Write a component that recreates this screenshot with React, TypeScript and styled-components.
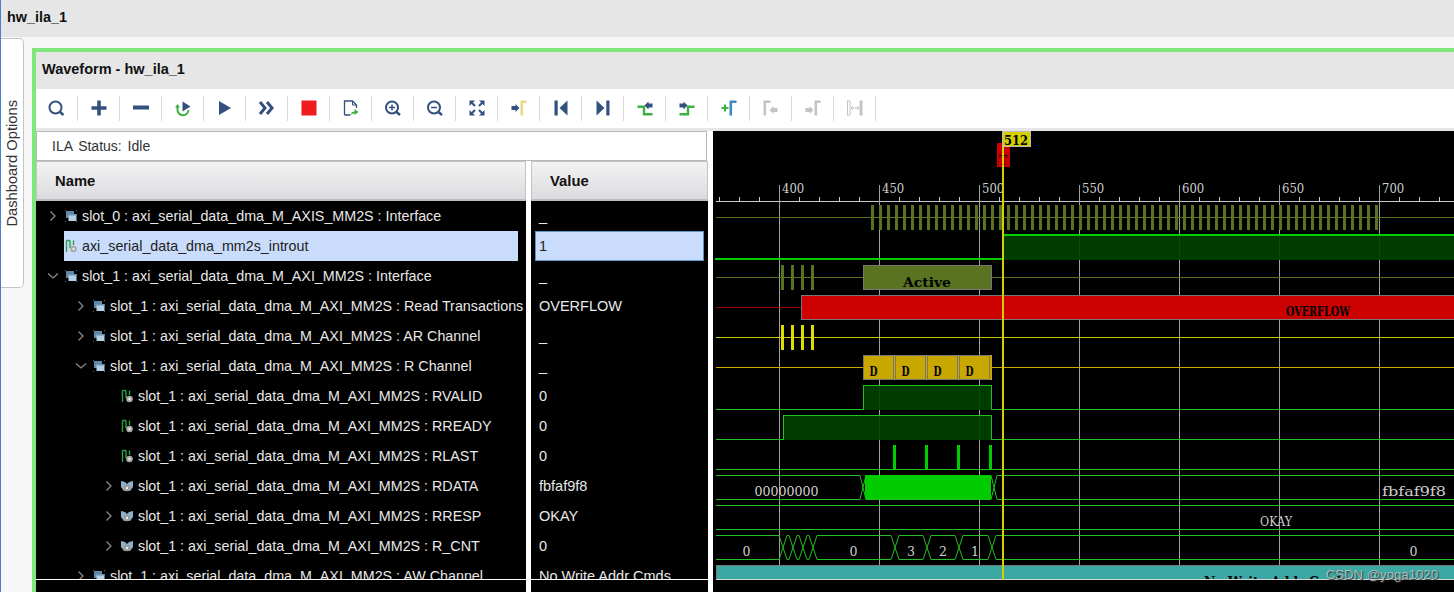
import React from 'react';
import styled, { createGlobalStyle } from 'styled-components';

const GlobalStyle = createGlobalStyle`
  html, body {
    margin: 0;
    padding: 0;
    background: #f7f7f7;
    overflow: hidden;
  }
  * { box-sizing: border-box; }
`;

const Page = styled.div`
  width: 1454px;
  height: 592px;
  display: flex;
  flex-direction: column;
  overflow: hidden;
  background: #f7f7f7;
  border-left: 1px solid #4a7fd0;
  font-family: "Liberation Sans", Arial, sans-serif;
  font-size: 14px;
`;

const TopBar = styled.div`
  height: 37px;
  flex: none;
  display: flex;
  align-items: center;
  padding: 0 0 3px 6px;
  background: #e6e6e6;
  font-size: 14.4px;
  font-weight: bold;
  color: #111;
`;

const Body = styled.div`
  flex: 1;
  display: flex;
  min-height: 0;
`;

const SideRail = styled.div`
  width: 31px;
  flex: none;
  padding-top: 1px;
`;

const SideTab = styled.div`
  width: 23px;
  height: 250px;
  display: flex;
  align-items: center;
  justify-content: center;
  background: #fff;
  border: 1px solid #c4c4c4;
  border-left: none;
  border-radius: 0 5px 5px 0;
`;

const TabLabel = styled.span`
  writing-mode: vertical-rl;
  transform: rotate(180deg);
  font-size: 14.7px;
  color: #333;
`;

const Panel = styled.div`
  flex: 1;
  margin-top: 11px;
  min-width: 0;
  display: flex;
  flex-direction: column;
  border-left: 4px solid #80e87a;
  border-top: 4px solid #80e87a;
`;

const TitleBar = styled.div`
  height: 37px;
  flex: none;
  display: flex;
  align-items: center;
  padding: 0 0 3px 6px;
  background: #e6e6e6;
  font-size: 14.5px;
  font-weight: bold;
  color: #111;
`;

const Toolbar = styled.div`
  height: 39px;
  flex: none;
  display: flex;
  padding-top: 7px;
  background: #fff;
`;

const ToolButton = styled.div`
  width: 42px;
  height: 25px;
  display: flex;
  align-items: center;
  justify-content: center;
  padding-bottom: 1px;
  border-right: 1px solid #d9d9d9;
  svg { display: block; }
`;

const Content = styled.div`
  flex: 1;
  min-height: 0;
  display: flex;
  border-top: 3px solid #e6e6e6;
  background: #fff;
`;

const LeftPane = styled.div`
  width: 677px;
  flex: none;
  display: flex;
  flex-direction: column;
  padding-right: 5px;
`;

const StatusBox = styled.div`
  width: 671px;
  height: 30px;
  flex: none;
  display: flex;
  align-items: center;
  padding-left: 15px;
  border: 1px solid #b8b8b8;
  background: #fff;
  color: #333;
  word-spacing: 2px;
`;

const Columns = styled.div`
  flex: 1;
  min-height: 0;
  display: flex;
  gap: 5px;
`;

const Column = styled.div<{ $width: number }>`
  width: ${p => p.$width}px;
  flex: none;
  display: flex;
  flex-direction: column;
  background: #000;
`;

const ColumnHeader = styled.div<{ $pad: number }>`
  height: 40px;
  flex: none;
  display: flex;
  align-items: center;
  padding-left: ${p => p.$pad}px;
  border: 1px solid #c4c4c4;
  border-bottom: 2px solid #bdbdbd;
  background: linear-gradient(#f3f3f3, #dcdce0);
  font-size: 14.8px;
  font-weight: bold;
  color: #111;
`;

const RowList = styled.div`
  height: 379px;
  flex: none;
  overflow: hidden;
  border-bottom: 1px solid #fff;
`;

const NameRow = styled.div<{ $level: number }>`
  height: 30px;
  display: flex;
  align-items: center;
  padding-left: ${p => 8 + p.$level * 28}px;
  padding-right: 8px;
  white-space: nowrap;
  font-size: 14.3px;
`;

const Chevron = styled.div`
  width: 20px;
  flex: none;
  display: flex;
  padding-left: 3px;
  svg { display: block; }
`;

const NameBody = styled.div<{ $selected?: boolean }>`
  flex: 1;
  height: 30px;
  display: flex;
  align-items: center;
  gap: 4px;
  background: ${p => (p.$selected ? '#c9dcfb' : 'transparent')};
  color: ${p => (p.$selected ? '#222' : '#e8e8e8')};
  svg { display: block; flex: none; }
`;

const ValueCell = styled.div<{ $selected?: boolean }>`
  height: 30px;
  margin: 0 4px;
  display: flex;
  align-items: center;
  padding-left: 4px;
  white-space: nowrap;
  font-size: 14.5px;
  background: ${p => (p.$selected ? '#c9dcfb' : 'transparent')};
  color: ${p => (p.$selected ? '#222' : '#e8e8e8')};
  outline: ${p => (p.$selected ? '1px solid #5a94c8' : 'none')};
  outline-offset: -1px;
`;

const WavePane = styled.div`
  position: relative;
  flex: 1;
  min-width: 0;
  background: #000;
  svg { display: block; }
`;

const Watermark = styled.div`
  position: absolute;
  right: 16px;
  bottom: 10px;
  font-size: 13.2px;
  color: rgba(205, 205, 205, 0.8);
  text-shadow: 1px 1px 1px #333;
`;

const WaveText = styled.text<{ $dark?: boolean }>`
  font-family: "DejaVu Serif", "Liberation Serif", serif;
  font-size: 13px;
  font-weight: ${p => (p.$dark ? 'bold' : 'normal')};
  fill: ${p => (p.$dark ? '#000' : '#cfcfcf')};
`;

const Label = ({ x, y, mid, cell = 8, dark, children }: {
  x: number;
  y: number;
  mid?: boolean;
  cell?: number;
  dark?: boolean;
  children: string;
}) => {
  const len = children.length * cell;
  return (
    <WaveText
      x={mid ? x - len / 2 : x}
      y={y}
      $dark={dark}
      textLength={len}
      lengthAdjust="spacingAndGlyphs"
    >
      {children}
    </WaveText>
  );
};

const BLUE = '#33507f';
const GREEN = '#3cb043';
const GOLD = '#e8d888';
const GREY = '#c4c4c4';

const Arrow = ({ x, y, left, color }: { x: number; y: number; left?: boolean; color: string }) => (
  <path
    d={left ? `M${x} ${y}l4-4v2h4v4h-4v2z` : `M${x + 8} ${y}l-4-4v2h-4v4h4v2z`}
    fill={color}
  />
);

const toolIcons: React.ReactNode[] = [
  <>
    <circle cx="9.5" cy="10.5" r="6" fill="none" stroke={BLUE} strokeWidth="2" />
    <path d="M14 15l3.5 3" stroke={BLUE} strokeWidth="2.4" />
  </>,
  <path d="M9.2 3.5h3.6v5.7h5.7v3.6h-5.7v5.7H9.2v-5.7H3.5V9.2h5.7z" fill={BLUE} />,
  <rect x="3" y="8.5" width="16" height="4" fill={BLUE} />,
  <>
    <path d="M5.5 9v3.5a5.5 5.5 0 0 0 11 .5" fill="none" stroke={GREEN} strokeWidth="2" />
    <path d="M3 10.5h5L5.5 7z" fill={GREEN} />
    <path d="M10.5 4.5l8 5-8 5z" fill={BLUE} />
  </>,
  <path d="M5 4l12 7-12 7z" fill={BLUE} />,
  <path d="M4 5l5 6-5 6M11 5l5 6-5 6" fill="none" stroke={BLUE} strokeWidth="3" />,
  <rect x="3.5" y="3.5" width="15" height="15" fill="#ee1c1c" />,
  <>
    <path d="M4.5 18V4h8l4 4v3M4.5 18h6" fill="none" stroke={BLUE} strokeWidth="1.3" />
    <path d="M12.5 4v4h4" fill="none" stroke={BLUE} strokeWidth="1" />
    <path d="M11 18c0-2.500 1.500-3.500 3.500-3.500V12l4 3-4 3v-1.500c-1.500 0-2.500.5-3.500 1.500z" fill={GREEN} />
  </>,
  <>
    <circle cx="10" cy="10.5" r="6" fill="none" stroke={BLUE} strokeWidth="2" />
    <path d="M14.5 15l3.500 3" stroke={BLUE} strokeWidth="2.4" />
    <path d="M7 10.500h6M10 7.500v6" stroke={BLUE} strokeWidth="1.5" />
  </>,
  <>
    <circle cx="10" cy="10.5" r="6" fill="none" stroke={BLUE} strokeWidth="2" />
    <path d="M14.5 15l3.500 3" stroke={BLUE} strokeWidth="2.4" />
    <path d="M7 10.500h6" stroke={BLUE} strokeWidth="1.5" />
  </>,
  <>
    <path d="M3.500 3.500h5.500l-5.500 5.500zM18.500 3.500v5.500l-5.500-5.500zM3.500 18.500v-5.500l5.500 5.500zM18.500 18.500h-5.500l5.500-5.500z" fill={BLUE} />
    <path d="M5 5l4 4M17 5l-4 4M5 17l4-4M17 17l-4-4" stroke={BLUE} strokeWidth="2" />
  </>,
  <>
    <Arrow x={3.5} y={11} color={BLUE} />
    <path d="M13.8 18.500V4.800h4.700" fill="none" stroke={GOLD} strokeWidth="2.6" />
  </>,
  <>
    <rect x="4.5" y="3.5" width="3.2" height="15" fill={BLUE} />
    <path d="M17.500 3.500v15L9.500 11z" fill={BLUE} />
  </>,
  <>
    <path d="M4.500 3.500v15l8-7.500z" fill={BLUE} />
    <rect x="14.3" y="3.5" width="3.2" height="15" fill={BLUE} />
  </>,
  <>
    <path d="M3.500 9.800h6.500v7.400h8.500" fill="none" stroke={GREEN} strokeWidth="2.4" />
    <Arrow x={10.5} y={8.5} left color={BLUE} />
  </>,
  <>
    <path d="M3.500 17.200h8.500V9.800h6.500" fill="none" stroke={GREEN} strokeWidth="2.4" />
    <Arrow x={3.5} y={8.5} color={BLUE} />
  </>,
  <>
    <path d="M3.500 11h7M7 7.500v7" stroke={GREEN} strokeWidth="2.2" />
    <path d="M12.800 18.500V4.800h5.700" fill="none" stroke="#3f88c0" strokeWidth="2.6" />
  </>,
  <>
    <path d="M4.800 18.500V4.800h5.700" fill="none" stroke={GREY} strokeWidth="2.6" />
    <Arrow x={9.5} y={13} left color={GREY} />
  </>,
  <>
    <Arrow x={3.5} y={13} color={GREY} />
    <path d="M13.800 18.500V4.800h4.700" fill="none" stroke={GREY} strokeWidth="2.6" />
  </>,
  <>
    <rect x="3.5" y="4" width="2.5" height="14" fill="none" stroke={GREY} />
    <rect x="15.5" y="3.5" width="3" height="15" fill={GREY} />
    <path d="M7 11h8M9 9l-2 2 2 2M13 9l2 2-2 2" fill="none" stroke={GREY} />
  </>,
];

const SlotIcon = () => (
  <svg width="14" height="14" viewBox="0 0 14 14">
    <rect x="2" y="2" width="8" height="7" fill="#5f87a8" />
    <rect x="4.5" y="5" width="8" height="7" fill="#b4d0e6" />
    <rect x="4.5" y="5" width="8" height="1.5" fill="#6d93b3" />
    <path d="M1 1h1v1H1zM12 1h1v1h-1zM1 12h1v1H1zM12 12h1v1h-1z" fill="#667" />
  </svg>
);

const BitIcon = () => (
  <svg width="14" height="14" viewBox="0 0 14 14">
    <path d="M2.500 13V1.500M6 9V1.500M2.500 1.500H6M9.500 1.500V6" fill="none" stroke="#2f9e44" strokeWidth="1.4" />
    <circle cx="9.5" cy="10" r="3.3" fill="#a9a9a9" />
    <circle cx="9.5" cy="10" r="1.2" fill="#eee" />
  </svg>
);

const BusIcon = () => (
  <svg width="14" height="14" viewBox="0 0 14 14">
    <path d="M1 2l4 1 2 2 2-2 4-1v6l-3 4H4L1 8z" fill="#8fb0c9" />
    <circle cx="7" cy="9" r="3.3" fill="#9a9a9a" />
    <circle cx="7" cy="9" r="1.2" fill="#eee" />
  </svg>
);

type RowData = {
  level: number;
  chevron?: 'right' | 'down';
  icon: 'slot' | 'bit' | 'bus';
  name: string;
  value: string;
  selected?: boolean;
};

const rows: RowData[] = [
  { level: 0, chevron: 'right', icon: 'slot', name: 'slot_0 : axi_serial_data_dma_M_AXIS_MM2S : Interface', value: '_' },
  { level: 0, icon: 'bit', name: 'axi_serial_data_dma_mm2s_introut', value: '1', selected: true },
  { level: 0, chevron: 'down', icon: 'slot', name: 'slot_1 : axi_serial_data_dma_M_AXI_MM2S : Interface', value: '_' },
  { level: 1, chevron: 'right', icon: 'slot', name: 'slot_1 : axi_serial_data_dma_M_AXI_MM2S : Read Transactions', value: 'OVERFLOW' },
  { level: 1, chevron: 'right', icon: 'slot', name: 'slot_1 : axi_serial_data_dma_M_AXI_MM2S : AR Channel', value: '_' },
  { level: 1, chevron: 'down', icon: 'slot', name: 'slot_1 : axi_serial_data_dma_M_AXI_MM2S : R Channel', value: '_' },
  { level: 2, icon: 'bit', name: 'slot_1 : axi_serial_data_dma_M_AXI_MM2S : RVALID', value: '0' },
  { level: 2, icon: 'bit', name: 'slot_1 : axi_serial_data_dma_M_AXI_MM2S : RREADY', value: '0' },
  { level: 2, icon: 'bit', name: 'slot_1 : axi_serial_data_dma_M_AXI_MM2S : RLAST', value: '0' },
  { level: 2, chevron: 'right', icon: 'bus', name: 'slot_1 : axi_serial_data_dma_M_AXI_MM2S : RDATA', value: 'fbfaf9f8' },
  { level: 2, chevron: 'right', icon: 'bus', name: 'slot_1 : axi_serial_data_dma_M_AXI_MM2S : RRESP', value: 'OKAY' },
  { level: 2, chevron: 'right', icon: 'bus', name: 'slot_1 : axi_serial_data_dma_M_AXI_MM2S : R_CNT', value: '0' },
  { level: 1, chevron: 'right', icon: 'slot', name: 'slot_1 : axi_serial_data_dma_M_AXI_MM2S : AW Channel', value: 'No Write Addr Cmds' },
];

const rowIcons = { slot: <SlotIcon />, bit: <BitIcon />, bus: <BusIcon /> };

const range = (from: number, to: number, step: number) => {
  const out: number[] = [];
  for (let v = from; v <= to; v += step) out.push(v);
  return out;
};

const END = 1454;
const START = 716;
const LINE = '#22c022';
const BRIGHT = '#00cc00';
const OLIVE = '#5a7320';
const DARK = '#004000';

const Bars = ({ xs, y, h, w, color }: { xs: number[]; y: number; h: number; w: number; color: string }) => (
  <>
    {xs.map(x => (
      <rect key={x} x={x} y={y} width={w} height={h} fill={color} />
    ))}
  </>
);

const HLine = ({ y, x1 = START, x2 = END, color }: { y: number; x1?: number; x2?: number; color: string }) => (
  <rect x={x1} y={y} width={x2 - x1} height={1} fill={color} />
);

// one bus row: two rails with crossings where the value changes
const Bus = ({ top, bottom, cross, w }: { top: number; bottom: number; cross: number[]; w: number }) => {
  const mid = (top + bottom) / 2;
  let d = `M${START} ${top}`;
  let e = `M${START} ${bottom}`;
  cross.forEach(x => {
    d += `L${x} ${top}L${x + w / 2} ${mid}L${x + w} ${bottom}`;
    e += `L${x} ${bottom}L${x + w / 2} ${mid}L${x + w} ${top}`;
    [d, e] = [e, d];
  });
  d += `L${END} ${top}`;
  e += `L${END} ${bottom}`;
  return <path d={`${d}${e}`} fill="none" stroke={LINE} strokeWidth="1" />;
};

const Waveform = () => (
  <svg width="741" height="461" viewBox="713 131 741 461" shapeRendering="crispEdges">
    <rect x="713" y="131" width="741" height="461" fill="#000" />

    {/* ruler */}
    <rect x={START} y={201} width={END - START} height={1} fill="#c8c8c8" />
    {range(719, END, 20).map(x => (
      <rect key={x} x={x} y={197} width={1} height={4} fill="#c8c8c8" />
    ))}
    {range(779, END, 100).map((x, i) => (
      <g key={x}>
        <rect x={x} y={185} width={1} height={381} fill="#a0a0a0" />
        <Label x={x + 3} y={193} cell={7.4}>{String(400 + i * 50)}</Label>
      </g>
    ))}

    {/* slot_0 */}
    <HLine y={217} color={OLIVE} />
    <Bars xs={range(871, 1378, 8)} y={205} h={25} w={3} color={OLIVE} />

    {/* introut */}
    <rect x={715} y={258} width={288} height={2} fill={BRIGHT} />
    <rect x={1004} y={236} width={450} height={24} fill={DARK} fillOpacity={0.93} />
    <rect x={1003} y={234} width={451} height={2} fill={BRIGHT} />
    <rect x={1003} y={234} width={1} height={26} fill={LINE} />

    {/* slot_1 */}
    <HLine y={277} color={OLIVE} />
    <Bars xs={[781, 791, 801, 811]} y={265} h={25} w={3} color={OLIVE} />
    <rect x={863.5} y={265.5} width={128} height={24} fill={OLIVE} stroke="#777" />
    <Label x={927} y={286.5} mid dark>Active</Label>

    {/* read transactions */}
    <HLine y={307} x2={801} color="#a00000" />
    <rect x={801.5} y={295.5} width={680} height={24} fill="#cc0000" stroke="#777" />
    <Label x={1286} y={316} dark>OVERFLOW</Label>

    {/* AR channel */}
    <HLine y={337} color="#c8c800" />
    <Bars xs={[781, 791, 801, 811]} y={325} h={25} w={3} color="#dddd00" />

    {/* R channel */}
    <HLine y={367} color="#c8a800" />
    <rect x={863} y={355} width={129} height={25} fill="#c8a800" />
    {[863, 895, 927, 959].map(x => (
      <rect key={x} x={x + 0.5} y={355.5} width={30} height={24} fill="#c8a800" stroke="#777" />
    ))}
    {[873.5, 905.5, 937.5, 969.5].map(x => (
      <Label key={x} x={x} y={376} mid dark>D</Label>
    ))}

    {/* RVALID */}
    <rect x={864} y={386} width={128} height={24} fill={DARK} fillOpacity={0.93} />
    <path d="M716 409.5H863.5V385.5H991.5V409.5H1454" fill="none" stroke={LINE} />

    {/* RREADY */}
    <rect x={784} y={416} width={208} height={24} fill={DARK} fillOpacity={0.93} />
    <path d="M716 439.5H783.5V415.5H991.5V439.5H1454" fill="none" stroke={LINE} />

    {/* RLAST */}
    <HLine y={469} color={LINE} />
    <Bars xs={[893, 925, 957, 989]} y={445} h={24} w={3} color={BRIGHT} />

    {/* RDATA */}
    <g shapeRendering="auto">
      <Bus top={475.5} bottom={499.5} cross={[860, 991]} w={6} />
    </g>
    <rect x={865} y={475} width={126} height={24} fill={BRIGHT} />
    <Label x={786.5} y={496} mid>00000000</Label>
    <Label x={1382} y={496}>fbfaf9f8</Label>

    {/* RRESP */}
    <HLine y={505} color={LINE} />
    <HLine y={529} color={LINE} />
    <Label x={1276} y={526} mid>OKAY</Label>

    {/* R_CNT */}
    <g shapeRendering="auto">
      <Bus top={535.5} bottom={559.5} cross={[779, 789, 799, 809, 891, 923, 955, 988]} w={8} />
    </g>
    <Label x={746.5} y={556} mid>0</Label>
    <Label x={853.5} y={556} mid>0</Label>
    <Label x={911} y={556} mid>3</Label>
    <Label x={943} y={556} mid>2</Label>
    <Label x={975} y={556} mid>1</Label>
    <Label x={1413.5} y={556} mid>0</Label>

    {/* AW channel */}
    <rect x={716.5} y={565.5} width={760} height={14} fill="#3ca8a4" stroke="#777" />
    <Label x={1204} y={586} dark>No Write Addr Cmds</Label>
    <rect x={713} y={580} width={741} height={12} fill="#000" />
    <rect x={716} y={579} width={738} height={1} fill="#d8d8d8" />

    {/* cursor */}
    <rect x={997} y={143} width={13} height={24} fill="#cc0000" />
    <Label x={1003} y={165} mid dark>T</Label>
    <rect x={1002} y={146} width={2} height={434} fill="#d4d000" />
    <rect x={1002.5} y={131.5} width={28} height={15} fill="#d4d000" stroke="#bbb" />
    <Label x={1004} y={145} dark>512</Label>
  </svg>
);

export default function App() {
  return (
    <Page>
      <GlobalStyle />
      <TopBar>hw_ila_1</TopBar>
      <Body>
        <SideRail>
          <SideTab>
            <TabLabel>Dashboard Options</TabLabel>
          </SideTab>
        </SideRail>
        <Panel>
          <TitleBar>Waveform - hw_ila_1</TitleBar>
          <Toolbar>
            {toolIcons.map((icon, i) => (
              <ToolButton key={i}>
                <svg width="22" height="22" viewBox="0 0 22 22">{icon}</svg>
              </ToolButton>
            ))}
          </Toolbar>
          <Content>
            <LeftPane>
              <StatusBox>ILA Status: Idle</StatusBox>
              <Columns>
                <Column $width={490}>
                  <ColumnHeader $pad={18}>Name</ColumnHeader>
                  <RowList>
                    {rows.map(r => (
                      <NameRow key={r.name} $level={r.level}>
                        <Chevron>
                          {r.chevron && (
                            <svg width="12" height="12" viewBox="0 0 12 12">
                              <path
                                d={r.chevron === 'right' ? 'M3.5 1.5L8 6l-4.500 4.500' : 'M1 3.500L6 8l5-4.500'}
                                fill="none"
                                stroke="#8a8a8a"
                                strokeWidth="1.3"
                              />
                            </svg>
                          )}
                        </Chevron>
                        <NameBody $selected={r.selected}>
                          {rowIcons[r.icon]}
                          {r.name}
                        </NameBody>
                      </NameRow>
                    ))}
                  </RowList>
                </Column>
                <Column $width={177}>
                  <ColumnHeader $pad={18}>Value</ColumnHeader>
                  <RowList>
                    {rows.map(r => (
                      <ValueCell key={r.name} $selected={r.selected}>{r.value}</ValueCell>
                    ))}
                  </RowList>
                </Column>
              </Columns>
            </LeftPane>
            <WavePane>
              <Waveform />
              <Watermark>CSDN @yoga1020</Watermark>
            </WavePane>
          </Content>
        </Panel>
      </Body>
    </Page>
  );
}
